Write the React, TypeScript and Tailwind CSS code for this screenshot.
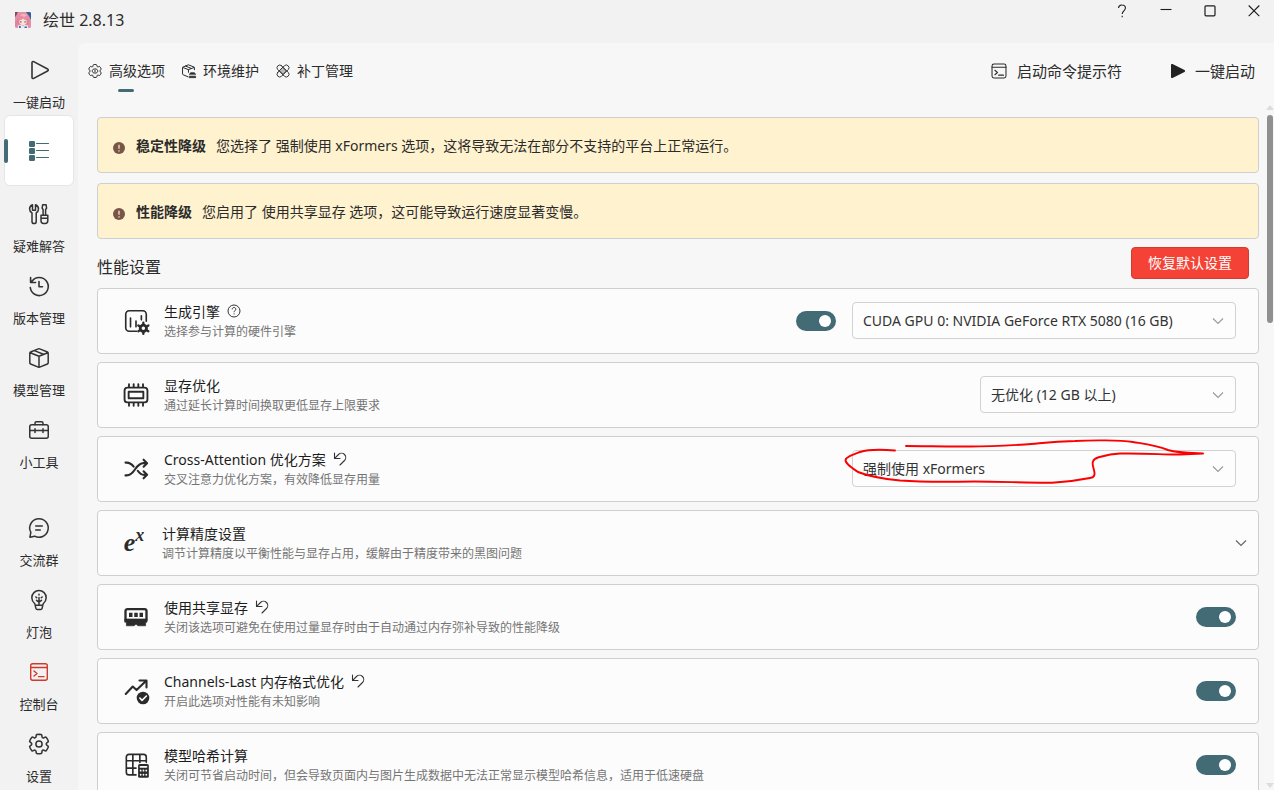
import React, { useState } from "react";
import type { ReactNode } from "react";

const FONT = "font-['Noto_Sans','Noto_Sans_CJK_SC',sans-serif]";

const GEAR =
  "M12.012 2.25c.734.008 1.465.093 2.182.253.312.07.546.33.582.649l.17 1.527c.077.701.669 1.232 1.375 1.233.19 0 .377-.04.552-.117l1.401-.615c.291-.128.632-.059.849.174 1.012 1.08 1.766 2.377 2.205 3.792.094.305-.014.636-.272.826l-1.241.915c-.354.26-.563.673-.563 1.112 0 .44.209.853.564 1.114l1.242.915c.257.19.366.521.272.826-.439 1.414-1.192 2.71-2.204 3.792-.217.232-.557.302-.848.174l-1.407-.616c-.402-.176-.864-.15-1.244.07-.38.219-.634.607-.682 1.043l-.169 1.527c-.035.315-.264.574-.572.647-1.448.345-2.957.345-4.406 0-.308-.073-.537-.332-.572-.647l-.169-1.524c-.05-.436-.303-.822-.683-1.041-.38-.22-.841-.245-1.242-.07l-1.407.616c-.291.128-.631.058-.848-.175-1.012-1.082-1.766-2.38-2.204-3.796-.094-.305.015-.636.272-.826l1.243-.916c.354-.26.564-.673.564-1.112 0-.44-.21-.853-.564-1.114l-1.243-.914c-.257-.19-.366-.521-.272-.826.439-1.415 1.193-2.711 2.205-3.792.217-.233.558-.302.849-.174l1.4.615c.403.177.867.15 1.249-.073.38-.221.633-.609.682-1.045l.17-1.526c.036-.319.27-.58.583-.649.717-.16 1.449-.244 2.201-.253Z";

function Icon({
  size,
  children,
  stroke = 1.5,
}: {
  size: string;
  children: ReactNode;
  stroke?: number;
}) {
  return (
    <svg
      viewBox="0 0 24 24"
      className={`${size} shrink-0`}
      fill="none"
      stroke="currentColor"
      strokeWidth={stroke}
      strokeLinecap="round"
      strokeLinejoin="round"
      aria-hidden="true"
    >
      {children}
    </svg>
  );
}

const NAV = "size-6";

const navTop = [
  {
    label: "一键启动",
    icon: (
      <Icon size={NAV} stroke={1.6}>
        <path d="M5 4.6v14.8c0 .9.9 1.4 1.7 1L20.6 13a1.1 1.1 0 0 0 0-2L6.7 3.6C5.9 3.2 5 3.7 5 4.6Z" />
      </Icon>
    ),
  },
  {
    label: "高级选项",
    active: true,
    icon: (
      <Icon size={NAV} stroke={1.2}>
        <g fill="currentColor" stroke="none">
          <rect x="2" y="2" width="6" height="6" rx="1.2" />
          <rect x="2" y="9" width="6" height="6" rx="1.2" />
          <rect x="2" y="16" width="6" height="6" rx="1.2" />
        </g>
        <path d="M9.5 4.5H21.5M9.5 11.5H21.5M9.5 18.5H21.5" />
      </Icon>
    ),
  },
  {
    label: "疑难解答",
    icon: (
      <Icon size={NAV} stroke={1.5}>
        <path d="M5.5 2.8v5.4h3V2.8c1.9.8 3 2.2 3 4.2 0 1.7-.9 3-2.3 3.900V19.400a2 2 0 0 1-4.200 0V10.900C3.500 10 2.600 8.700 2.600 7c0-2 1-3.400 2.900-4.200Z" />
        <path d="M15.700 2.800h3.400l.5 3.200-1 1.700v5.500h-2.500V7.700l-1-1.700ZM14 13.200h6.800v5.600a2.600 2.600 0 0 1-2.600 2.600h-1.600a2.600 2.600 0 0 1-2.600-2.600ZM14 16.200h6.800" />
      </Icon>
    ),
  },
  {
    label: "版本管理",
    icon: (
      <Icon size={NAV} stroke={1.6}>
        <path d="M3.3 13.500A9 9 0 1 0 5 7.200L3.600 8.500M3.600 3.500v5h5M12 7.500v5.300h3.500" />
      </Icon>
    ),
  },
  {
    label: "模型管理",
    icon: (
      <Icon size={NAV} stroke={1.5}>
        <path d="M11.300 2.900 3.600 6a1.300 1.300 0 0 0-.8 1.200v9.600c0 .5.300 1 .8 1.200l7.700 3.100c.5.200.9.200 1.400 0l7.700-3.100c.5-.2.800-.7.800-1.200V7.200c0-.5-.3-1-.8-1.200l-7.700-3.100a2 2 0 0 0-1.400 0ZM3.200 6.700 12 10.300l8.800-3.600M12 10.300v11M7.400 4.600l9 3.700" />
      </Icon>
    ),
  },
  {
    label: "小工具",
    icon: (
      <Icon size={NAV} stroke={1.5}>
        <rect x="2.750" y="6.700" width="18.500" height="13.600" rx="2" />
        <path d="M8 6.700V5.200c0-.8.600-1.400 1.400-1.400h5.200c.8 0 1.400.6 1.400 1.400v1.500M2.800 12.500h18.400M8 10.800v3.600M16 10.800v3.600" />
      </Icon>
    ),
  },
];

const navBottom = [
  {
    label: "交流群",
    icon: (
      <Icon size={NAV} stroke={1.5}>
        <path d="M12 2.750A9.250 9.250 0 1 1 7.600 20.150L2.900 21.200 3.850 16.400A9.250 9.250 0 0 1 12 2.750ZM8.700 10h6.600M8.700 14h4.600" />
      </Icon>
    ),
  },
  {
    label: "灯泡",
    icon: (
      <Icon size={NAV} stroke={1.5}>
        <path d="M12 2.500a7.200 7.200 0 0 1 7.200 7.200c0 2.200-1.100 4.200-3 6l-1.100 4.600a1.500 1.500 0 0 1-1.500 1.200h-3.200a1.500 1.500 0 0 1-1.500-1.200l-1.100-4.600c-2-1.800-3-3.800-3-6A7.200 7.200 0 0 1 12 2.500ZM8.100 17.300h7.800M12 9.500v7.500M12 6.300v.6M8.800 9l.9.700M15.200 9l-.9.700M9.500 12.300l2.500 1.900 2.500-1.900" />
      </Icon>
    ),
  },
  {
    label: "控制台",
    danger: true,
    icon: (
      <Icon size={NAV} stroke={1.4}>
        <rect x="3.700" y="3.700" width="16.600" height="16.600" rx="2" />
        <path d="M3.700 7.500h16.600M7 11l3 2.500L7 16M11.500 16.600H17" />
      </Icon>
    ),
  },
  {
    label: "设置",
    icon: (
      <Icon size={NAV} stroke={1.5}>
        <path d={GEAR} />
        <circle cx="12" cy="12" r="3.100" />
      </Icon>
    ),
  },
];

type NavEntry = { label: string; icon: ReactNode; active?: boolean; danger?: boolean };

function NavItem({ label, icon, active, danger }: NavEntry) {
  if (active) {
    return (
      <button
        type="button"
        aria-label={label}
        aria-current="page"
        className="relative mx-1 mb-px flex h-[71px] items-center justify-center rounded-md border border-[#e6e6e6] bg-white text-[#436b75]"
      >
        <span className="absolute -left-px h-6 w-1 rounded-full bg-[#436b75]" />
        {icon}
      </button>
    );
  }
  return (
    <button
      type="button"
      className="flex h-[72px] flex-col items-center gap-3 pt-[15px] text-[13px] leading-4"
    >
      <span className={danger ? "text-[#d0392b]" : "text-[#333]"}>{icon}</span>
      {label}
    </button>
  );
}

const tabs = [
  {
    label: "高级选项",
    icon: (
      <Icon size="size-4" stroke={1.5}>
        <path d={GEAR} />
        <path d="M10 9.200c-3 0-3 5.600 0 5.600M14 9.200c3 0 3 5.600 0 5.600M12 8v8" />
      </Icon>
    ),
  },
  {
    label: "环境维护",
    icon: (
      <Icon size="size-4" stroke={1.5}>
        <path d="M10 20.500 3.200 17.600a1.300 1.300 0 0 1-.9-1.200V7.200c0-.5.300-1 .8-1.200l8-3.300 8.200 3.300c.5.200.8.700.8 1.200V10M2.700 6.700 11.200 10l8.600-3.400M11.200 10v4M6.800 4.600l9 3.700" />
        <path d="M12.800 17c.4-1.600 1.200-2.500 2.200-2.500h4.500c1 0 1.800.9 2.200 2.500ZM12.500 20h9.500v2h-9.500Z" fill="currentColor" strokeWidth="1" />
      </Icon>
    ),
  },
  {
    label: "补丁管理",
    icon: (
      <Icon size="size-4" stroke={1.3}>
        <rect x="1" y="7.900" width="22" height="8.200" rx="4.100" transform="rotate(45 12 12)" />
        <rect x="1" y="7.900" width="22" height="8.200" rx="4.100" transform="rotate(-45 12 12)" />
        <path d="m12 7 5 5-5 5-5-5Z" fill="#bbb" />
      </Icon>
    ),
  },
];

const CARD = "size-7";

function Switch({ label }: { label: string }) {
  const [on, setOn] = useState(true);
  return (
    <input
      type="checkbox"
      role="switch"
      aria-label={label}
      checked={on}
      onChange={() => setOn(!on)}
      className="flex h-5 w-10 shrink-0 cursor-pointer appearance-none items-center justify-start rounded-full bg-[#8a8a8a] px-[5px] before:size-3 before:rounded-full before:bg-white checked:justify-end checked:bg-[#436b75]"
    />
  );
}

function Select({
  label,
  value,
  wide,
  children,
}: {
  label: string;
  value: string;
  wide?: boolean;
  children?: ReactNode;
}) {
  return (
    <div className={`relative mb-px ${wide ? "w-96" : "w-64"}`}>
      <select
        aria-label={label}
        defaultValue={value}
        className="block h-[37px] w-full appearance-none rounded-[4px] border border-[#d2d2d2] bg-[#fdfdfd] pr-8 pl-[10px] text-[14px] text-[#333]"
      >
        <option>{value}</option>
      </select>
      <svg viewBox="0 0 12 8" className="pointer-events-none absolute top-[15px] right-3 h-2 w-3" fill="none" stroke="#999" strokeWidth="1.100" aria-hidden="true">
        <path d="m1 1.500 5 5 5-5" />
      </svg>
      {children}
    </div>
  );
}

function Card({
  icon,
  title,
  sub,
  extra,
  expander,
  children,
}: {
  icon: ReactNode;
  title: string;
  sub: string;
  extra?: ReactNode;
  expander?: boolean;
  children: ReactNode;
}) {
  return (
    <section
      className={`flex h-[66px] shrink-0 items-center rounded-[4px] border border-[#cfcfcf] bg-[#fcfcfc] ${
        expander ? "pr-[11px] pl-[22px]" : "pr-[22px] pl-6"
      }`}
    >
      <span className="flex w-7 justify-center text-[#2b2b2b]">{icon}</span>
      <div className="ml-[14px] min-w-0 grow pt-[2px]">
        <h3 className="flex items-center gap-[7px] text-[14px] leading-5 text-[#1c1c1c]">
          {title}
          {extra}
        </h3>
        <p className="truncate text-[12px] leading-5 text-[#757575]">{sub}</p>
      </div>
      <div className="flex shrink-0 items-center gap-4">{children}</div>
    </section>
  );
}

function Undo({ label }: { label: string }) {
  return (
    <button type="button" aria-label={label} className="mb-[3px] text-[#333]">
      <svg viewBox="0 0 14 14" className="size-3.5" fill="none" stroke="currentColor" strokeWidth="1.100" strokeLinecap="round" strokeLinejoin="round" aria-hidden="true">
        <path d="M1.500 1v5.500H7M1.700 6.300 5.500 2.500a4.300 4.300 0 0 1 6 0 4.300 4.300 0 0 1 0 6L7 13" />
      </svg>
    </button>
  );
}

function Alert({ title, text }: { title: string; text: string }) {
  return (
    <div role="alert" className="flex h-14 shrink-0 items-center rounded-[4px] border border-[#cfcfcf] bg-[#fff2ce] px-[15px] text-[14px]">
      <svg viewBox="0 0 12 12" className="mt-[6px] size-3 shrink-0" aria-hidden="true">
        <circle cx="6" cy="6" r="6" fill="#795548" />
        <path d="M6 2.800v4M6 8.200v1.200" stroke="#fff2ce" strokeWidth="1.200" />
      </svg>
      <strong className="ml-[11px] font-bold">{title}</strong>
      <span className="ml-[10px]">{text}</span>
    </div>
  );
}

function Logo() {
  return (
    <svg viewBox="0 0 16 16" className="size-4" aria-hidden="true">
      <rect width="16" height="16" rx="1.500" fill="#e493a6" />
      <path d="M11 0h3.500A1.500 1.500 0 0 1 16 1.500V8l-2-4Z" fill="#2f5f9e" />
      <path d="M0 0h3L1 4 0 5Z" fill="#7d4a6b" />
      <path d="M2 5c2-4.500 9-5 12 0v7l-2 2H3l-2-3Z" fill="#e58ba2" />
      <path d="M5 3c2-1.500 5-1.500 7 .5L9 5Z" fill="#f3b4c2" />
      <path d="M4.500 8.500C6 8 7 7.500 8 6.500c1 1 2 1.500 3.500 2v2.500L9.500 13h-3l-2-2Z" fill="#fbe3d4" />
      <path d="M5 9.200h1.600v1.300H5ZM9.300 9.200h1.600v1.300H9.300Z" fill="#8a6a86" />
      <path d="M3 13.500 6.500 13 8 14l1.500-1 3.500.5V16H3Z" fill="#e4ebf7" />
      <path d="M4 14h1.800v2H4ZM9.500 14.500H12V16H9.500Z" fill="#4a6db0" />
      <path d="M3 7v5M13 7v6M1 9v5" stroke="#cf7690" strokeWidth=".8" />
    </svg>
  );
}

const WINDOW_BUTTON = "flex h-[21px] w-10 items-center justify-center";

export default function App() {
  return (
    <div className={`flex h-screen flex-col overflow-hidden bg-[#f2f2f2] text-[#2b2b2b] ${FONT}`}>
      <header className="flex h-[43px] shrink-0 items-start justify-between">
        <div className="flex h-10 items-center gap-3 pl-[15px]">
          <Logo />
          <h1 className="text-[16px] leading-6">绘世 2.8.13</h1>
        </div>
        <div className="flex gap-1 text-[#1c1c1c]">
          <button type="button" aria-label="帮助" className={WINDOW_BUTTON}>
            <svg viewBox="0 0 12 14" className="h-3.5 w-3" fill="none" stroke="currentColor" strokeWidth="1.100" aria-hidden="true">
              <path d="M2.500 4A3.300 3.300 0 0 1 6 1c2 0 3.400 1.200 3.400 3 0 2.700-3.200 3-3.200 6M6.200 11.800v1.400" />
            </svg>
          </button>
          <button type="button" aria-label="最小化" className={WINDOW_BUTTON}>
            <svg viewBox="0 0 12 12" className="size-3" stroke="currentColor" strokeWidth="1.100" aria-hidden="true">
              <path d="M.5 4.500h11" />
            </svg>
          </button>
          <button type="button" aria-label="最大化" className={WINDOW_BUTTON}>
            <svg viewBox="0 0 12 12" className="size-3" fill="none" stroke="currentColor" strokeWidth="1.200" aria-hidden="true">
              <rect x="1" y=".8" width="10" height="10" rx="1" />
            </svg>
          </button>
          <button type="button" aria-label="关闭" className={WINDOW_BUTTON}>
            <svg viewBox="0 0 12 12" className="size-3" stroke="currentColor" strokeWidth="1.100" aria-hidden="true">
              <path d="m.7.500 10.600 10.600M11.300.500.700 11.100" />
            </svg>
          </button>
        </div>
      </header>

      <div className="flex min-h-0 grow">
        <nav className="flex w-[78px] shrink-0 flex-col justify-between">
          <div className="flex flex-col">
            {navTop.map((n) => (
              <NavItem key={n.label} {...n} />
            ))}
          </div>
          <div className="flex flex-col pb-px">
            {navBottom.map((n) => (
              <NavItem key={n.label} {...n} />
            ))}
          </div>
        </nav>

        <main className="flex min-w-0 grow flex-col rounded-tl-lg bg-[#f7f7f7]">
          <div className="flex h-[61px] shrink-0 items-start justify-between pt-[17px] pr-[19px] pl-[9px]">
            <div role="tablist" className="flex gap-4">
              {tabs.map((t, i) => (
                <button
                  key={t.label}
                  type="button"
                  role="tab"
                  aria-selected={i === 0}
                  className="flex flex-col items-center gap-[7px]"
                >
                  <span className="flex items-center gap-[6px] text-[14px] leading-[22px]">
                    {t.icon}
                    {t.label}
                  </span>
                  {i === 0 && <span className="h-[3px] w-4 rounded-full bg-[#436b75]" />}
                </button>
              ))}
            </div>
            <div className="flex items-center gap-12 text-[15px] leading-[22px]">
              <button type="button" className="flex items-center gap-[9px]">
                <Icon size="size-[18px]" stroke={1.400}>
                  <rect x="2.700" y="2.700" width="18.600" height="18.600" rx="2.500" />
                  <path d="M2.700 7h18.600M6.500 11l3.500 3-3.500 3M11.500 17.500H18" />
                </Icon>
                启动命令提示符
              </button>
              <button type="button" className="flex items-center gap-[9px]">
                <svg viewBox="0 0 16 16" className="size-4" fill="#222" aria-hidden="true">
                  <path d="M1 2v12c0 .8.700 1.200 1.500.9L14.500 9c.8-.4.8-1.600 0-2L2.500 1.100C1.700.8 1 1.200 1 2Z" />
                </svg>
                一键启动
              </button>
            </div>
          </div>

          <div className="flex min-h-0 grow">
            <div className="flex min-w-0 grow flex-col overflow-hidden pt-[13px] pl-[19px]">
              <div className="flex flex-col gap-[10px]">
                <Alert title="稳定性降级" text="您选择了 强制使用 xFormers 选项，这将导致无法在部分不支持的平台上正常运行。" />
                <Alert title="性能降级" text="您启用了 使用共享显存 选项，这可能导致运行速度显著变慢。" />
              </div>
              <div className="mb-[2px] flex h-[47px] shrink-0 items-center justify-between pr-[10px]">
                <h2 className="mt-2 text-[16px] leading-6">性能设置</h2>
                <button type="button" className="h-8 rounded-[4px] border border-[#d43a2f] bg-[#f44336] px-4 text-[14px] text-white">
                  恢复默认设置
                </button>
              </div>
              <div className="flex flex-col gap-2">
                <Card
                  title="生成引擎"
                  sub="选择参与计算的硬件引擎"
                  extra={
                    <svg viewBox="0 0 14 14" className="mb-[3px] size-3.5" fill="none" stroke="#333" strokeWidth="1" aria-hidden="true">
                      <circle cx="7" cy="7" r="6" />
                      <path d="M5.200 5.400c0-1.200.8-1.900 1.800-1.900s1.800.7 1.800 1.700c0 1.400-1.700 1.500-1.700 3M7.100 9.400v1" />
                    </svg>
                  }
                  icon={
                    <Icon size={CARD} stroke={1.400}>
                      <path d="M12.500 20.800H6.200a3 3 0 0 1-3-3V6.200a3 3 0 0 1 3-3h11.600a3 3 0 0 1 3 3v6M7.300 9.500v7.500M12 12v5M16.600 7.500v3.500" />
                      <circle cx="18.300" cy="18.300" r="2.700" strokeWidth="2.400" />
                      <path d="M18.300 13.500v1.200M18.300 22v1M14 15.800l1 .6M21.600 20.200l1 .6M14 20.800l1-.6M21.600 16.400l1-.6" strokeWidth="2" />
                    </Icon>
                  }
                >
                  <Switch label="生成引擎" />
                  <Select wide label="生成引擎设备" value="CUDA GPU 0: NVIDIA GeForce RTX 5080 (16 GB)" />
                </Card>
                <Card
                  title="显存优化"
                  sub="通过延长计算时间换取更低显存上限要求"
                  icon={
                    <Icon size={CARD} stroke={1.600}>
                      <rect x="2.200" y="5.700" width="19.600" height="12.600" rx="2.500" />
                      <rect x="5.700" y="9.200" width="12.600" height="5.600" />
                      <path d="M6 2.800v2.500M10 2.800v2.500M14 2.800v2.500M18 2.800v2.500M6 18.700v2.500M10 18.700v2.500M14 18.700v2.500M18 18.700v2.500" />
                    </Icon>
                  }
                >
                  <Select label="显存优化" value="无优化 (12 GB 以上)" />
                </Card>
                <Card
                  title="Cross-Attention 优化方案"
                  sub="交叉注意力优化方案，有效降低显存用量"
                  extra={<Undo label="还原 Cross-Attention 优化方案" />}
                  icon={
                    <Icon size={CARD} stroke={1.800}>
                      <path d="M3 6.500h1c3 0 4.600 1.600 6 3.500M3 17.500h1c7.500 0 7-10.500 14.500-10.500H21M13.500 13.500c1.400 2 2.800 3.500 5.500 3.500h2M18.500 4 21.500 7l-3 3M18.500 14l3 3-3 3" />
                    </Icon>
                  }
                >
                  <Select wide label="Cross-Attention 优化方案" value="强制使用 xFormers">
                    <svg
                      viewBox="840 436 400 60"
                      className="pointer-events-none absolute -top-[14px] -left-3 h-[60px] w-[400px]"
                      fill="none"
                      stroke="#fa0000"
                      strokeWidth="1.900"
                      strokeLinecap="round"
                      strokeLinejoin="round"
                      aria-hidden="true"
                    >
                      <path d="M895 450.500C883 449.500 868 449.500 860 452C852 455 846 457 845.500 460C845.500 464 852 468 858 472C868 476 885 479 900 480.500C920 482 950 482 975 481.500C1000 481.500 1030 483 1052 482.700C1068 482 1080 480 1090 478C1097 477 1094 471 1093.500 468C1091.500 462 1093 459 1098 457.500C1107 455 1110 454 1120 453.500C1150 453 1165 455 1180 454.500L1203 453.500C1190 453 1178 453 1168 450C1155 445 1145 444 1133 442C1120 440 1092 440 1075 441C1050 441.500 1040 443.500 1025 444.500C1000 446 980 446.700 965 446.500C945 446.700 925 446 906 446" />
                    </svg>
                  </Select>
                </Card>
                <Card
                  expander
                  title="计算精度设置"
                  sub="调节计算精度以平衡性能与显存占用，缓解由于精度带来的黑图问题"
                  icon={
                    <span className="flex items-start font-['Liberation_Serif',serif] font-bold italic">
                      <span className="text-[26px] leading-7">e</span>
                      <sup className="top-0 text-[18px] leading-3">x</sup>
                    </span>
                  }
                >
                  <button type="button" aria-label="展开计算精度设置">
                    <svg viewBox="0 0 12 8" className="h-2 w-3" fill="none" stroke="#666" strokeWidth="1.200" aria-hidden="true">
                      <path d="m1 1.500 5 5 5-5" />
                    </svg>
                  </button>
                </Card>
                <Card
                  title="使用共享显存"
                  sub="关闭该选项可避免在使用过量显存时由于自动通过内存弥补导致的性能降级"
                  extra={<Undo label="还原使用共享显存" />}
                  icon={
                    <Icon size={CARD} stroke={2}>
                      <path d="M4.700 5.200h14.600a1.700 1.700 0 0 1 1.700 1.700v7.600H3V6.900a1.700 1.700 0 0 1 1.700-1.700Z" />
                      <path d="M2.600 14h18.800v2.500h-1.200v3h-6.500l-1.700-1.400-1.700 1.400H3.800v-3H2.600Z" fill="currentColor" strokeWidth=".6" />
                      <path d="M6 8.300h3v3.800H6ZM10.500 8.300h3v3.800h-3ZM15 8.300h3v3.800h-3Z" fill="currentColor" stroke="none" />
                    </Icon>
                  }
                >
                  <Switch label="使用共享显存" />
                </Card>
                <Card
                  title="Channels-Last 内存格式优化"
                  sub="开启此选项对性能有未知影响"
                  extra={<Undo label="还原 Channels-Last 内存格式优化" />}
                  icon={
                    <Icon size={CARD} stroke={1.800}>
                      <path d="m3.200 14.500 6-6.300 3.300 3L20.500 3.500M15 3H21v6" />
                      <circle cx="18" cy="18" r="5.400" fill="currentColor" stroke="none" />
                      <path d="m15.300 18 1.900 2 3.700-3.700" stroke="#fcfcfc" strokeWidth="1.400" />
                    </Icon>
                  }
                >
                  <Switch label="Channels-Last 内存格式优化" />
                </Card>
                <Card
                  title="模型哈希计算"
                  sub="关闭可节省启动时间，但会导致页面内与图片生成数据中无法正常显示模型哈希信息，适用于低速硬盘"
                  icon={
                    <Icon size={CARD} stroke={1.400}>
                      <path d="M12 20.500H6a2.300 2.300 0 0 1-2.300-2.300V5.200a2.300 2.300 0 0 1 2.300-2.300h12.500a2.300 2.300 0 0 1 2.300 2.300v4.500M3.700 8.400h17.100M3.700 14.700h8.300M9.300 2.900v17.600M15.300 2.900v7" />
                      <rect x="13.800" y="11.200" width="9.200" height="11.800" rx="1.400" fill="currentColor" stroke="none" />
                      <path d="M15.800 13.600h5.200M16 16.700v.2M18.400 16.700v.2M20.800 16.700v.2M16 20.200v.2M18.400 20.200v.2M20.800 20.200v.2" stroke="#fcfcfc" strokeWidth="1.500" />
                    </Icon>
                  }
                >
                  <Switch label="模型哈希计算" />
                </Card>
              </div>
            </div>

            <div className="flex w-[15px] shrink-0 flex-col items-end justify-between overflow-hidden pt-[1px] pb-[2px]" aria-hidden="true">
              <div className="flex flex-col items-end gap-[5px]">
                <svg viewBox="0 0 8 5" className="h-[5px] w-2" fill="#dcdcdc">
                  <path d="M4 0 8 5H0Z" />
                </svg>
                <span className="mr-px h-[208px] w-1.5 rounded-full bg-[#909090]" />
              </div>
              <svg viewBox="0 0 8 5" className="h-[5px] w-2" fill="#dcdcdc">
                <path d="M4 5 0 0h8Z" />
              </svg>
            </div>
          </div>
        </main>
      </div>
    </div>
  );
}
